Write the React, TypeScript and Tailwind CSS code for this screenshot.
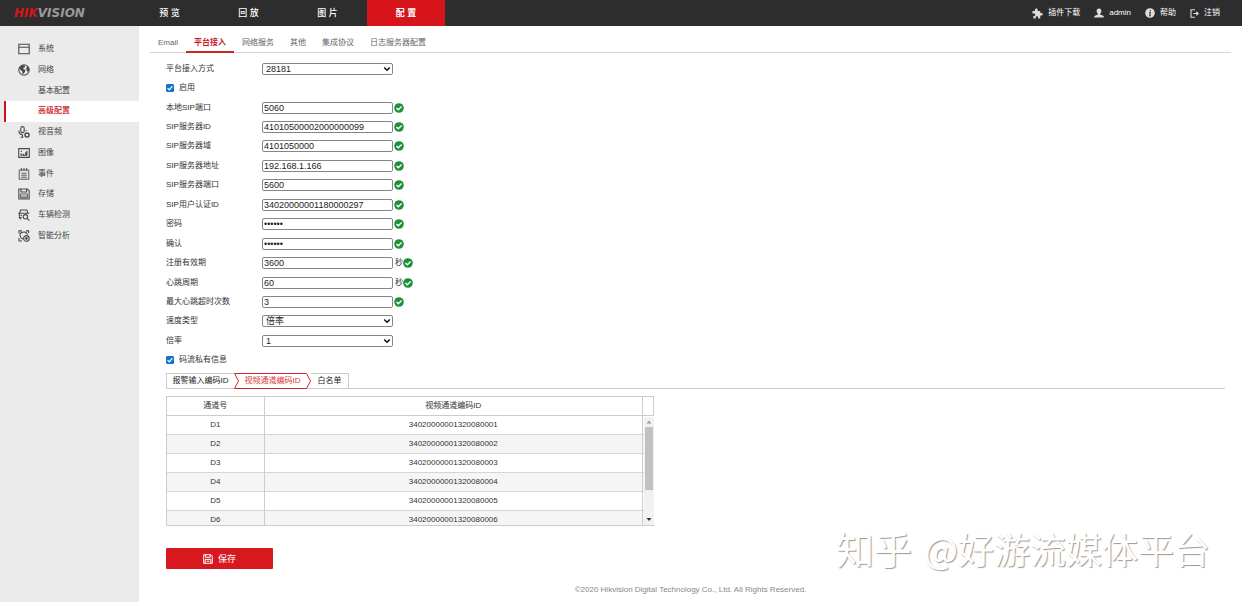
import type { ReactNode } from "react";

const menu = [
  { label: "系统", icon: "system" },
  { label: "网络", icon: "network" },
  { label: "基本配置" },
  { label: "高级配置", active: true },
  { label: "视音频", icon: "video" },
  { label: "图像", icon: "image" },
  { label: "事件", icon: "event" },
  { label: "存储", icon: "storage" },
  { label: "车辆检测", icon: "vehicle" },
  { label: "智能分析", icon: "smart" },
];

const tabs = ["Email", "平台接入", "网络服务", "其他", "集成协议", "日志服务器配置"];

const fields = [
  { id: "port", label: "本地SIP端口", value: "5060" },
  { id: "server-id", label: "SIP服务器ID", value: "41010500002000000099" },
  { id: "domain", label: "SIP服务器域", value: "4101050000" },
  { id: "address", label: "SIP服务器地址", value: "192.168.1.166" },
  { id: "server-port", label: "SIP服务器端口", value: "5600" },
  { id: "user-id", label: "SIP用户认证ID", value: "34020000001180000297" },
  { id: "password", label: "密码", value: "123456", type: "password" },
  { id: "confirm", label: "确认", value: "123456", type: "password" },
  { id: "expiry", label: "注册有效期", value: "3600", unit: "秒" },
  { id: "heartbeat", label: "心跳周期", value: "60", unit: "秒" },
  { id: "timeouts", label: "最大心跳超时次数", value: "3" },
];

const channels = [1, 2, 3, 4, 5, 6].map((n) => ({ no: `D${n}`, code: `3402000000132008000${n}` }));

function MenuIcon({ name }: { name: string }) {
  return (
    <svg viewBox="0 0 12 12" className="size-3" fill="none" stroke="#4a4a4a" strokeWidth="1.1" aria-hidden="true">
      {name === "system" && <path d="M.8 1.3h10.4v9.4H.8zM.8 4.2h10.4" />}
      {name === "network" && (
        <>
          <circle cx="6" cy="6" r="5.2" />
          <path d="M1.4 3.4 4.6 1l2.6.4-.4 1.8-1.6.8.6 1.2 1.6.6-.4 2-1.6 2.2-1-.4-.2-2.4-2-1.400zM8.6 3l1.6-.2 1 2.4-.8 2.6-1.400-.6-.8-2z" fill="#4a4a4a" stroke="none" />
        </>
      )}
      {name === "video" && (
        <>
          <rect x="2.8" y=".6" width="3.4" height="6" rx="1.7" />
          <path d="M.9 4.6c0 2.6 1.4 4 3.6 4M8.2 4v1M4.5 8.6v2.6M2.4 11.2h3" />
          <circle cx="9" cy="9" r="2" strokeWidth="1.5" />
        </>
      )}
      {name === "image" && (
        <>
          <path d="M.7 1.6h10.6v8.8H.7z" />
          <path d="M2.400 8.800V6.600h1.400v1.200h1V6.800h1.400v1h1V5.400l2.200-1.800v5.200z" fill="#4a4a4a" stroke="none" />
          <circle cx="3.4" cy="4.2" r=".7" fill="#4a4a4a" stroke="none" />
        </>
      )}
      {name === "event" && <path d="M1.2 2h9.6v9.2H1.2zM3.4 0v3M6 0v3M8.6 0v3M3.2 5.2h5.6M3.2 7.2h5.6M3.2 9.2h5.6" strokeWidth=".9" />}
      {name === "storage" && (
        <>
          <path d="M.8 1h8.6l1.8 1.8V11H.8zM3 1v3h5.6V1" />
          <path d="M2.4 6h7.2v3.8H2.4zM4 9.6V7.4M6 9.6V7.4M8 9.6V7.4" strokeWidth=".9" />
        </>
      )}
      {name === "vehicle" && (
        <>
          <path d="M3.8 8.6H1.4V4.8L2.6 1h6.2L10 4.2M.2 4.2h11M2.2 8.6v1.8M2.6 6.4h1.2" />
          <circle cx="7.4" cy="7.8" r="2.2" />
          <path d="m9 9.4 2.4 2.2" />
        </>
      )}
      {name === "smart" && (
        <>
          <path d="M4 .9H1v2.6M8 .9h2.6v2.2M1 8v3h3M3.6 2.2C1.2 4 1.4 7.6 5 9.2M3.4 2.8c2.6-1.6 5-.8 6.2 1.6" />
          <circle cx="8.4" cy="8.4" r="2.8" />
          <circle cx="8.4" cy="8.4" r=".8" fill="#4a4a4a" />
        </>
      )}
    </svg>
  );
}

function SaveIcon() {
  return (
    <svg viewBox="0 0 10 10" className="size-[10px]" fill="none" stroke="#fff" aria-hidden="true">
      <path d="M.7.7h7.2l1.4 1.4v7.2H.7zM2.6.7v2.6h4.6V.7M2.2 9.2V5.4h5.6v3.8M3.6 7.2h2.8" />
    </svg>
  );
}

function Ok() {
  return (
    <svg viewBox="0 0 10 10" className="size-[10px]" role="img" aria-label="OK">
      <circle cx="5" cy="5" r="4.8" fill="#1f9038" />
      <path d="m2.5 5 1.8 1.8L7.6 3.5" fill="none" stroke="#fff" strokeWidth="1.4" />
    </svg>
  );
}

function Check({ id, label }: { id: string; label: string }) {
  return (
    <div className="flex items-center gap-[5px]">
      <span className="relative flex size-2">
        <input id={id} type="checkbox" defaultChecked className="peer size-2 appearance-none rounded-[1px] border border-[#767676] bg-white checked:border-[#1b6fd0] checked:bg-[#1b6fd0]" />
        <svg viewBox="0 0 8 8" className="pointer-events-none absolute inset-0 hidden size-2 peer-checked:block" fill="none" stroke="#fff" strokeWidth="1.2">
          <path d="m1.6 4.1 1.7 1.7 3.1-3.6" />
        </svg>
      </span>
      <label htmlFor={id}>{label}</label>
    </div>
  );
}

function Row({ id, label, children }: { id: string; label: string; children: ReactNode }) {
  return (
    <div className="flex items-center">
      <label htmlFor={id} className="w-24 shrink-0">{label}</label>
      {children}
    </div>
  );
}

function Select({ id, value }: { id: string; value: string }) {
  return (
    <span className="relative flex">
      <select id={id} className="h-3 w-[131px] appearance-none rounded-[2px] border border-[#858585] bg-white pl-[3px] text-[9px] leading-[10px] text-[#222]">
        <option>{value}</option>
      </select>
      <svg viewBox="0 0 8 6" className="pointer-events-none absolute top-[3px] right-[2px] h-[6px] w-2" fill="none" stroke="#111" strokeWidth="1.5">
        <path d="m1.2 1.5 2.8 2.8 2.8-2.8" />
      </svg>
    </span>
  );
}

function Header() {
  return (
    <header className="flex h-[26px] bg-[#2d2d2d] text-white">
      <div className="flex w-[130px] items-center pl-[14px] font-['DejaVu_Sans'] text-[12px] font-bold italic">
        <span className="text-[#d7141a]">HIK</span>
        <span className="text-[#9a9a9a]">VISION</span>
      </div>
      <nav className="flex text-[9px] font-medium">
        {["预 览", "回 放", "图 片", "配 置"].map((item) => (
          <a key={item} href="#" className={item === "配 置" ? "flex w-[78px] items-center justify-center bg-[#d7141a] font-bold" : "flex w-[79px] items-center justify-center"}>
            {item}
          </a>
        ))}
      </nav>
      <div className="ml-auto flex items-center gap-[14px] pr-[22px]">
        <a href="#" className="flex items-center gap-[5px]">
          <svg viewBox="0 0 24 24" className="size-[11px]" fill="#ddd">
            <path d="M9.5 1a3 3 0 0 1 3 3v2.500H18V11h2.500a2.800 2.800 0 0 1 0 5.600H18V23h-4.500v-2.200a2.700 2.700 0 0 0-5.400 0V23H3v-5.500h1.500a2.700 2.700 0 0 0 0-5.500H1V6.500h5.500V4a3 3 0 0 1 3-3z" />
          </svg>
          插件下载
        </a>
        <a href="#" className="flex items-center gap-[5px]">
          <svg viewBox="0 0 10 10" className="size-[10px]" fill="#ddd">
            <path d="M5 .4c1.500 0 2.400 1 2.400 2.500 0 1.100-.5 2.200-1.300 2.800v.9l3.600 1.300v1.600H.3V7.900l3.600-1.300v-.9C3.100 5.100 2.600 4 2.600 2.900 2.600 1.400 3.500.4 5 .4z" />
          </svg>
          admin
        </a>
        <a href="#" className="flex items-center gap-[5px]">
          <svg viewBox="0 0 10 10" className="size-[10px]">
            <circle cx="5" cy="5" r="4.8" fill="#ddd" />
            <path d="M5.4 2v1.2M4.2 4.500h1L4.700 7.800h1" fill="none" stroke="#2d2d2d" strokeWidth="1.1" />
          </svg>
          帮助
        </a>
        <a href="#" className="flex items-center gap-[5px]">
          <svg viewBox="0 0 9 9" className="size-[9px]" fill="none" stroke="#ddd" strokeWidth="1.1">
            <path d="M5 .8H1v7.400h4M3.400 4.500h4.800M6.300 2.700l1.900 1.800-1.900 1.800" />
          </svg>
          注销
        </a>
      </div>
    </header>
  );
}

function Sidebar() {
  return (
    <aside className="w-[139px] shrink-0 bg-[#ebebeb] pt-[13px]">
      <ul className="grid h-[207px] auto-rows-fr">
        {menu.map((item) => (
          <li key={item.label} className="flex">
            <a
              href="#"
              className={
                item.active
                  ? "ml-1 flex flex-1 items-center border-l-2 border-[#c8161d] bg-white pl-3 font-medium text-[#c8161d]"
                  : "flex flex-1 items-center pl-[18px] text-[#444]"
              }
            >
              <span className="w-5">{item.icon && <MenuIcon name={item.icon} />}</span>
              {item.label}
            </a>
          </li>
        ))}
      </ul>
    </aside>
  );
}

function StepTabs() {
  return (
    <div className="mr-[6px] flex h-4 border-b border-[#ccc]">
      <button className="h-4 w-[68px] border border-r-0 border-[#ccc] text-[#222]">报警输入编码ID</button>
      <button className="relative h-4 w-[77px] text-[#d23c40]">
        <svg viewBox="0 0 77 16" className="absolute inset-0 h-4 w-[77px]" fill="none" stroke="#c8262b">
          <path d="M.5.5H72.5L76.5 8l-4 7.5H.5L4.5 8z" />
        </svg>
        视频通道编码ID
      </button>
      <button className="h-4 w-[38px] border border-l-0 border-[#ccc] text-[#222]">白名单</button>
    </div>
  );
}

function ChannelTable() {
  return (
    <div className="relative mt-[7px] h-[130px] w-[489px] overflow-hidden border border-[#ccc] border-r-transparent">
      <table className="w-full table-fixed border-collapse text-center">
        <colgroup>
          <col className="w-[97px]" />
          <col />
          <col className="w-[11px]" />
        </colgroup>
        <thead>
          <tr className="h-[18px] border-b border-[#ccc]">
            <th className="border-r border-[#ccc] font-normal">通道号</th>
            <th className="border-r border-[#ccc] font-normal">视频通道编码ID</th>
            <th className="border-r border-[#ccc]" />
          </tr>
        </thead>
        <tbody>
          {channels.map((channel) => (
            <tr key={channel.no} className="h-[19px] border-b border-[#d5d5d5] even:bg-[#f5f5f5]">
              <td className="border-r border-[#ccc]">{channel.no}</td>
              <td className="border-r border-[#ccc]">{channel.code}</td>
              <td />
            </tr>
          ))}
        </tbody>
      </table>
      <div className="absolute top-5 right-0 bottom-0 flex w-[10px] flex-col items-center bg-[#f1f1f1]">
        <svg viewBox="0 0 10 10" className="size-[10px]" fill="#999">
          <path d="m5 3.5 2.5 3h-5z" />
        </svg>
        <div className="h-[63px] w-2 bg-[#c1c1c1]" />
        <svg viewBox="0 0 10 10" className="mt-auto size-[10px]" fill="#333">
          <path d="m5 6 2.5-3h-5z" />
        </svg>
      </div>
    </div>
  );
}

export default function App() {
  return (
    <div className="relative flex min-h-screen flex-col bg-white font-['Liberation_Sans','Noto_Sans_CJK_SC',sans-serif] text-[8px] leading-3 text-[#333]">
      <Header />
      <div className="flex flex-1">
        <Sidebar />
        <main className="flex min-w-0 flex-1 flex-col px-[11px]">
          <nav className="flex h-[27px] items-end border-b border-[#d5d5d5] text-[#666]">
            {tabs.map((tab) => (
              <a
                key={tab}
                href="#"
                className={
                  tab === "平台接入"
                    ? "-mb-px h-4 border-b-2 border-[#c8262b] px-2 font-bold text-[#c8161d]"
                    : "h-[15px] px-2"
                }
              >
                {tab}
              </a>
            ))}
          </nav>
          <div className="pt-[6px] pl-4">
            <form className="grid h-[311px] auto-rows-fr">
              <Row id="mode" label="平台接入方式">
                <Select id="mode" value="28181" />
              </Row>
              <Check id="enable" label="启用" />
              {fields.map((field) => (
                <Row key={field.id} id={field.id} label={field.label}>
                  <input
                    id={field.id}
                    type={field.type ?? "text"}
                    defaultValue={field.value}
                    className="mr-px h-3 w-[131px] rounded-[2px] border border-[#858585] px-px text-[9px] leading-[10px] text-[#222]"
                  />
                  {field.unit && <span className="pl-px">{field.unit}</span>}
                  <Ok />
                </Row>
              ))}
              <Row id="speed" label="速度类型">
                <Select id="speed" value="倍率" />
              </Row>
              <Row id="rate" label="倍率">
                <Select id="rate" value="1" />
              </Row>
              <Check id="private" label="码流私有信息" />
            </form>
            <div className="mt-[3px]">
              <StepTabs />
            </div>
            <ChannelTable />
            <button className="mt-[22px] flex h-[21px] w-[107px] items-center justify-center gap-[5px] rounded-[1px] bg-[#d7191f] text-[9px] text-white">
              <SaveIcon />
              保存
            </button>
          </div>
          <footer className="mt-auto pb-[6px] text-center text-[#888]">
            ©2020 Hikvision Digital Technology Co., Ltd. All Rights Reserved.
          </footer>
        </main>
      </div>
      <div className="pointer-events-none absolute right-8 bottom-8 flex gap-3 font-['Noto_Sans_CJK_SC',sans-serif] text-[36px] leading-[44px] text-white [text-shadow:1px_1px_1px_#999]">
        <span className="text-[38px]">知乎</span>
        <span>@好游流媒体平台</span>
      </div>
    </div>
  );
}
